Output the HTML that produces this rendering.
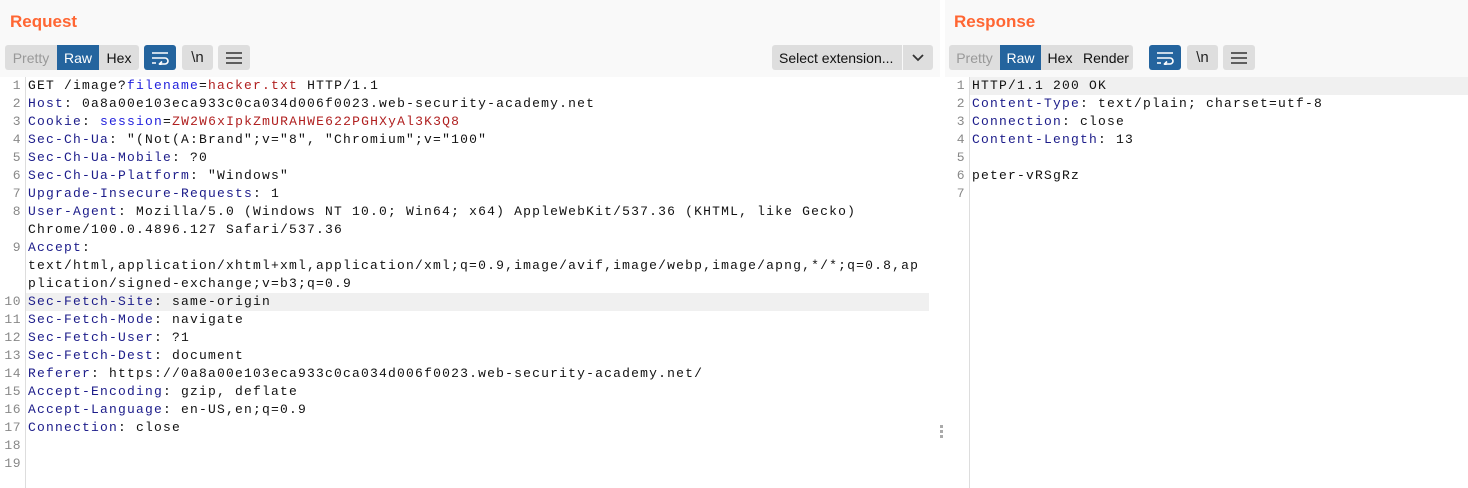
<!DOCTYPE html>
<html><head><meta charset="utf-8"><style>
*{margin:0;padding:0;box-sizing:border-box}
body{width:1468px;height:488px;background:#fff;position:relative;overflow:hidden;font-family:"Liberation Sans",sans-serif}
.hdr{position:absolute;top:0;height:77px;background:#f9f9f9}
.title{position:absolute;top:12px;font-size:17px;font-weight:bold;color:#ff6633}
.tb{position:absolute;top:45px;height:25px;display:flex}
.seg{display:flex;background:#dedede;border-radius:3px;overflow:hidden;height:25px}
.seg span{padding:0;text-align:center;font-size:14px;line-height:26px;color:#111;white-space:nowrap}
.seg span.dis{color:#999}
.seg span.on{background:#24649e;color:#fff}
.btn{position:absolute;top:45px;height:25px;border-radius:3px;background:#dedede;display:flex;align-items:center;justify-content:center;font-size:15px;color:#222;white-space:nowrap}
.btn.on{background:#24649e}
.code{position:absolute;top:77px;font-family:"Liberation Mono",monospace;font-size:13px;letter-spacing:1.2px;line-height:18px;color:#111}
.row{height:18px;white-space:pre;position:relative}
.ln{position:absolute;text-align:right;color:#888;letter-spacing:0.5px}
.k{color:#1c1c8a}.b{color:#2222dd}.r{color:#b02020}
.gut{position:absolute;top:77px;bottom:0;border-left:1px solid #ddd}
.hl{position:absolute;height:18px;background:#f0f0f0}
</style></head><body>
<div class="hdr" style="left:0;width:940px"></div>
<div class="hdr" style="left:945px;width:523px"></div>
<div class="title" style="left:10px">Request</div>
<div class="title" style="left:954px">Response</div>

<div class="tb" style="left:5px"><div class="seg"><span class="dis" style="width:52px">Pretty</span><span class="on" style="width:42px">Raw</span><span style="width:40px">Hex</span></div></div>
<div class="btn on" style="left:144px;width:32px"><svg width="20" height="14" viewBox="0 0 20 14"><path d="M2 2H18M2 7H15a3 3 0 0 1 0 6H10M12 10.5l-2.5 2.5 2.5 2.5M2 12H6" stroke="#fff" stroke-width="1.6" fill="none"/></svg></div>
<div class="btn" style="left:182px;width:31px">\n</div>
<div class="btn" style="left:218px;width:32px"><svg width="16" height="12"><path d="M0 1H16M0 6H16M0 11H16" stroke="#333" stroke-width="1.5"/></svg></div>
<div class="btn" style="left:772px;width:130px;border-radius:3px 0 0 3px;justify-content:flex-start;padding-left:7px;font-size:14px;color:#111">Select extension...</div>
<div class="btn" style="left:903px;width:30px;border-radius:0 3px 3px 0"><svg width="12" height="8"><path d="M1 1l5 5 5-5" stroke="#333" stroke-width="1.8" fill="none"/></svg></div>

<div class="tb" style="left:949px"><div class="seg"><span class="dis" style="width:51px">Pretty</span><span class="on" style="width:41px">Raw</span><span style="width:38px">Hex</span><span style="width:54px">Render</span></div></div>
<div class="btn on" style="left:1149px;width:32px"><svg width="20" height="14" viewBox="0 0 20 14"><path d="M2 2H18M2 7H15a3 3 0 0 1 0 6H10M12 10.5l-2.5 2.5 2.5 2.5M2 12H6" stroke="#fff" stroke-width="1.6" fill="none"/></svg></div>
<div class="btn" style="left:1187px;width:31px">\n</div>
<div class="btn" style="left:1223px;width:32px"><svg width="16" height="12"><path d="M0 1H16M0 6H16M0 11H16" stroke="#333" stroke-width="1.5"/></svg></div>

<div class="hl" style="left:26px;width:903px;top:293px"></div>
<div class="hl" style="left:970px;width:498px;top:77px"></div>
<div class="gut" style="left:25px"></div>
<div class="gut" style="left:969px"></div>
<div style="position:absolute;left:940px;top:425px;width:3px">
<div style="width:3px;height:3px;background:#aaa;margin-bottom:2px"></div><div style="width:3px;height:3px;background:#aaa;margin-bottom:2px"></div><div style="width:3px;height:3px;background:#aaa"></div></div>

<div class="code" style="left:0;width:930px">
<div class="row"><span class="ln" style="left:0;width:21px">1</span><span style="position:absolute;left:28px">GET /image?<span class="b">filename</span>=<span class="r">hacker.txt</span> HTTP/1.1</span></div>
<div class="row"><span class="ln" style="left:0;width:21px">2</span><span style="position:absolute;left:28px"><span class="k">Host</span>: 0a8a00e103eca933c0ca034d006f0023.web-security-academy.net</span></div>
<div class="row"><span class="ln" style="left:0;width:21px">3</span><span style="position:absolute;left:28px"><span class="k">Cookie</span>: <span class="b">session</span>=<span class="r">ZW2W6xIpkZmURAHWE622PGHXyAl3K3Q8</span></span></div>
<div class="row"><span class="ln" style="left:0;width:21px">4</span><span style="position:absolute;left:28px"><span class="k">Sec-Ch-Ua</span>: "(Not(A:Brand";v="8", "Chromium";v="100"</span></div>
<div class="row"><span class="ln" style="left:0;width:21px">5</span><span style="position:absolute;left:28px"><span class="k">Sec-Ch-Ua-Mobile</span>: ?0</span></div>
<div class="row"><span class="ln" style="left:0;width:21px">6</span><span style="position:absolute;left:28px"><span class="k">Sec-Ch-Ua-Platform</span>: "Windows"</span></div>
<div class="row"><span class="ln" style="left:0;width:21px">7</span><span style="position:absolute;left:28px"><span class="k">Upgrade-Insecure-Requests</span>: 1</span></div>
<div class="row"><span class="ln" style="left:0;width:21px">8</span><span style="position:absolute;left:28px"><span class="k">User-Agent</span>: Mozilla/5.0 (Windows NT 10.0; Win64; x64) AppleWebKit/537.36 (KHTML, like Gecko)</span></div>
<div class="row"><span style="position:absolute;left:28px">Chrome/100.0.4896.127 Safari/537.36</span></div>
<div class="row"><span class="ln" style="left:0;width:21px">9</span><span style="position:absolute;left:28px"><span class="k">Accept</span>:</span></div>
<div class="row"><span style="position:absolute;left:28px">text/html,application/xhtml+xml,application/xml;q=0.9,image/avif,image/webp,image/apng,*/*;q=0.8,ap</span></div>
<div class="row"><span style="position:absolute;left:28px">plication/signed-exchange;v=b3;q=0.9</span></div>
<div class="row"><span class="ln" style="left:0;width:21px">10</span><span style="position:absolute;left:28px"><span class="k">Sec-Fetch-Site</span>: same-origin</span></div>
<div class="row"><span class="ln" style="left:0;width:21px">11</span><span style="position:absolute;left:28px"><span class="k">Sec-Fetch-Mode</span>: navigate</span></div>
<div class="row"><span class="ln" style="left:0;width:21px">12</span><span style="position:absolute;left:28px"><span class="k">Sec-Fetch-User</span>: ?1</span></div>
<div class="row"><span class="ln" style="left:0;width:21px">13</span><span style="position:absolute;left:28px"><span class="k">Sec-Fetch-Dest</span>: document</span></div>
<div class="row"><span class="ln" style="left:0;width:21px">14</span><span style="position:absolute;left:28px"><span class="k">Referer</span>: https://0a8a00e103eca933c0ca034d006f0023.web-security-academy.net/</span></div>
<div class="row"><span class="ln" style="left:0;width:21px">15</span><span style="position:absolute;left:28px"><span class="k">Accept-Encoding</span>: gzip, deflate</span></div>
<div class="row"><span class="ln" style="left:0;width:21px">16</span><span style="position:absolute;left:28px"><span class="k">Accept-Language</span>: en-US,en;q=0.9</span></div>
<div class="row"><span class="ln" style="left:0;width:21px">17</span><span style="position:absolute;left:28px"><span class="k">Connection</span>: close</span></div>
<div class="row"><span class="ln" style="left:0;width:21px">18</span></div>
<div class="row"><span class="ln" style="left:0;width:21px">19</span></div>
</div>

<div class="code" style="left:944px;width:524px">
<div class="row"><span class="ln" style="left:0;width:21px">1</span><span style="position:absolute;left:28px">HTTP/1.1 200 OK</span></div>
<div class="row"><span class="ln" style="left:0;width:21px">2</span><span style="position:absolute;left:28px"><span class="k">Content-Type</span>: text/plain; charset=utf-8</span></div>
<div class="row"><span class="ln" style="left:0;width:21px">3</span><span style="position:absolute;left:28px"><span class="k">Connection</span>: close</span></div>
<div class="row"><span class="ln" style="left:0;width:21px">4</span><span style="position:absolute;left:28px"><span class="k">Content-Length</span>: 13</span></div>
<div class="row"><span class="ln" style="left:0;width:21px">5</span></div>
<div class="row"><span class="ln" style="left:0;width:21px">6</span><span style="position:absolute;left:28px">peter-vRSgRz</span></div>
<div class="row"><span class="ln" style="left:0;width:21px">7</span></div>
</div>
</body></html>
